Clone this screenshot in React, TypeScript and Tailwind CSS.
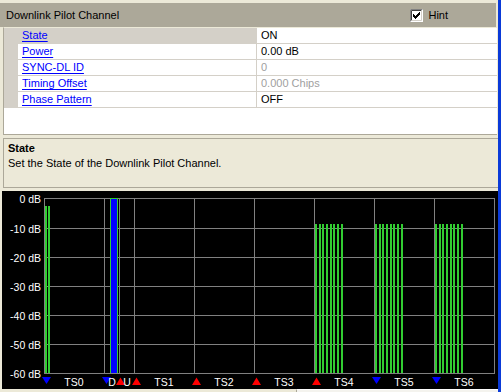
import React from "react";

const rows = [
  { name: "State", value: "ON", dim: false, sel: true },
  { name: "Power", value: "0.00 dB", dim: false, sel: false },
  { name: "SYNC-DL ID", value: "0", dim: true, sel: false },
  { name: "Timing Offset", value: "0.000 Chips", dim: true, sel: false },
  { name: "Phase Pattern", value: "OFF", dim: false, sel: false },
];

const hLines = [198, 228, 257, 286, 315, 344, 373];
const vLines = [44, 104, 119, 134, 194, 254, 314, 374, 434, 494];
const yLabels = ["0 dB", "-10 dB", "-20 dB", "-30 dB", "-40 dB", "-50 dB", "-60 dB"];
const GREEN = "#32cd32";
const offs = [1, 5, 8, 12, 16, 19, 23, 27];

function Chart() {
  const multi: number[] = [];
  [314, 374, 434].forEach((b) => {
    offs.forEach((o) => multi.push(b + o));
  });
  const down = [46.5, 106.5, 376.5, 436.5];
  const up = [120.5, 136.5, 196.5, 256.5, 316.5];
  const labels: [string, number][] = [
    ["TS0", 74],
    ["D", 112],
    ["U", 127],
    ["TS1", 164],
    ["TS2", 224],
    ["TS3", 284],
    ["TS4", 344],
    ["TS5", 404],
    ["TS6", 464],
  ];
  return (
    <svg width={496} height={198} viewBox="2 191 496 198" className="block">
      <rect x={2} y={191} width={496} height={198} fill="#000" />
      {hLines.map((y) => (
        <line key={"h" + y} x1={44} x2={495} y1={y + 0.5} y2={y + 0.5} stroke="#808080" strokeWidth={1} shapeRendering="crispEdges" />
      ))}
      {vLines.map((x) => (
        <line key={"v" + x} x1={x + 0.5} x2={x + 0.5} y1={198} y2={374} stroke="#808080" strokeWidth={1} shapeRendering="crispEdges" />
      ))}
      <rect x={45} y={206} width={2} height={167} fill={GREEN} shapeRendering="crispEdges" />
      <rect x={48} y={206} width={2} height={167} fill={GREEN} shapeRendering="crispEdges" />
      <rect x={110} y={198} width={8} height={175} fill={GREEN} shapeRendering="crispEdges" />
      <rect x={111} y={199} width={6} height={174} fill="#0000ff" shapeRendering="crispEdges" />
      {multi.map((x, i) => (
        <rect key={"b" + i} x={x} y={224} width={2} height={149} fill={GREEN} shapeRendering="crispEdges" />
      ))}
      {yLabels.map((t, i) => (
        <text key={t} x={41} y={hLines[i] + 0.5} textAnchor="end" dominantBaseline="central" fill="#fff" fontSize={10.5} fontFamily="'Liberation Sans', Arial, sans-serif">
          {t}
        </text>
      ))}
      {down.map((c) => (
        <polygon key={"d" + c} points={`${c - 4.5},377 ${c + 4.5},377 ${c},384`} fill="#0000ff" />
      ))}
      {up.map((c) => (
        <polygon key={"u" + c} points={`${c - 4.5},385 ${c + 4.5},385 ${c},377.5`} fill="#ff0000" />
      ))}
      {labels.map(([t, x]) => (
        <text key={t} x={x} y={381.5} textAnchor="middle" dominantBaseline="central" fill="#fff" fontSize={10.5} fontFamily="'Liberation Sans', Arial, sans-serif">
          {t}
        </text>
      ))}
    </svg>
  );
}

function CheckBox() {
  return (
    <svg width={13} height={13} viewBox="0 0 13 13" className="block">
      <rect x={0} y={0} width={13} height={13} fill="#ffffff" />
      <path d="M0.5 12.5 V0.5 H12.5" stroke="#808080" fill="none" />
      <path d="M1.5 11.5 V1.5 H11.5" stroke="#404040" fill="none" />
      <path d="M1.5 11.5 H11.5 V1.5" stroke="#d4d0c8" fill="none" />
      <path d="M3 5 L5 7 L10 2 L10 5 L5 10 L3 8 Z" fill="#000" shapeRendering="crispEdges" />
    </svg>
  );
}

export default function App() {
  return (
    <div
      className="flex w-[501px] h-[392px] bg-[#ece9d8] text-[11px] text-black overflow-hidden"
      style={{ fontFamily: "'Liberation Sans', Arial, sans-serif" }}
    >
      <div className="flex flex-col w-[498px]">
        <div className="h-[3px]" />
        <div className="h-[24px] mr-[2px] bg-[#aca899] flex items-center pl-[6px]">
          <span>Downlink Pilot Channel</span>
          <div className="ml-auto mr-[48px] flex items-center gap-[5px]">
            <CheckBox />
            <span>Hint</span>
          </div>
        </div>
        <div className="h-[108px] ml-[3px] mr-[1px] bg-white border-t border-t-[#ece9d8] border-l border-b border-[#aca899] flex flex-col">
          {rows.map((r) => (
            <div key={r.name} className="flex h-[16px]">
              <div className="w-[14px] bg-[#d4d0c8]" />
              <div
                className={`w-[238px] pl-[4px] flex items-center border-b border-[#d4d0c8] ${r.sel ? "bg-[#d4d0c8]" : "bg-white"}`}
              >
                <span className="text-[#0000ff] underline underline-offset-[2px] leading-none">{r.name}</span>
              </div>
              <div className="flex-1 pl-[4px] flex items-center border-l border-b border-[#d4d0c8]">
                <span className={`leading-none ${r.dim ? "text-[#a0a0a0]" : "text-black"}`}>{r.value}</span>
              </div>
            </div>
          ))}
        </div>
        <div className="h-[3px]" />
        <div className="h-[50px] ml-[3px] border-t border-b border-l border-[#aca899] pl-[4px] pt-[2px] leading-[15px]">
          <div className="font-bold">State</div>
          <div>Set the State of the Downlink Pilot Channel.</div>
        </div>
        <div className="h-[3px]" />
        <div className="h-[198px] ml-[2px]">
          <Chart />
        </div>
        <div className="h-[3px] flex">
          <div className="w-[296px]" />
          <div className="flex-1 border-l border-[#aca899] border-t border-t-white bg-[#f4f3ee]" />
        </div>
      </div>
      <div className="w-[3px] bg-[#0a3ad8]" />
    </div>
  );
}
